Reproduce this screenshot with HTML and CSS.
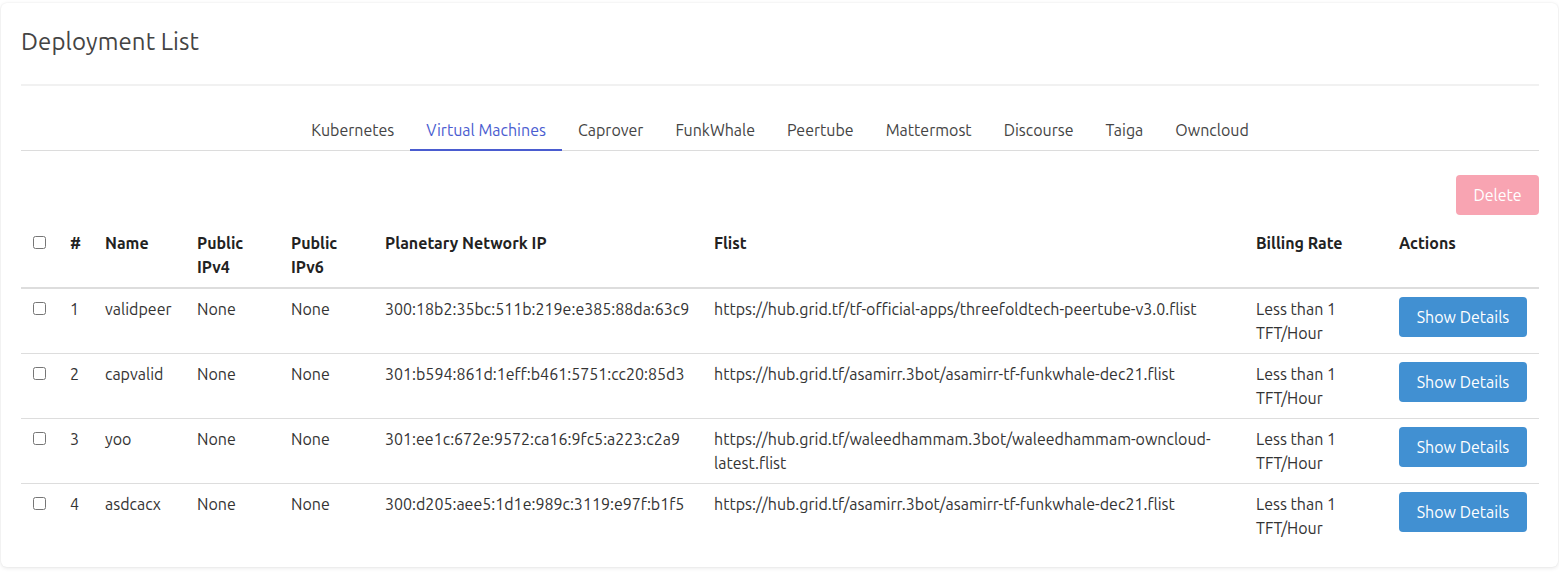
FILE: index.html
```html
<!DOCTYPE html>
<html>
<head>
<meta charset="utf-8">
<link rel="stylesheet" href="styles.css">
</head>
<body>
<div class="card">
  <h1 class="title">Deployment List</h1>
  <div class="divider"></div>
  <nav class="tabs">
    <a class="tab">Kubernetes</a>
    <a class="tab active">Virtual Machines</a>
    <a class="tab">Caprover</a>
    <a class="tab">FunkWhale</a>
    <a class="tab">Peertube</a>
    <a class="tab">Mattermost</a>
    <a class="tab">Discourse</a>
    <a class="tab">Taiga</a>
    <a class="tab">Owncloud</a>
  </nav>
  <div class="toolbar">
    <button class="btn btn-delete" disabled>Delete</button>
  </div>
  <table class="list">
    <colgroup>
      <col class="c-check"><col class="c-num"><col class="c-name"><col class="c-ip4"><col class="c-ip6"><col class="c-pip"><col class="c-flist"><col class="c-bill"><col class="c-act">
    </colgroup>
    <thead>
      <tr>
        <th><input type="checkbox" class="chk"></th>
        <th>#</th>
        <th>Name</th>
        <th>Public IPv4</th>
        <th>Public IPv6</th>
        <th>Planetary Network IP</th>
        <th>Flist</th>
        <th>Billing Rate</th>
        <th>Actions</th>
      </tr>
    </thead>
    <tbody>
      <tr>
        <td><input type="checkbox" class="chk"></td>
        <td>1</td>
        <td>validpeer</td>
        <td>None</td>
        <td>None</td>
        <td>300:18b2:35bc:511b:219e:e385:88da:63c9</td>
        <td>https://hub.grid.tf/tf-official-apps/threefoldtech-peertube-v3.0.flist</td>
        <td>Less than 1 TFT/Hour</td>
        <td><button class="btn btn-details">Show Details</button></td>
      </tr>
      <tr>
        <td><input type="checkbox" class="chk"></td>
        <td>2</td>
        <td>capvalid</td>
        <td>None</td>
        <td>None</td>
        <td>301:b594:861d:1eff:b461:5751:cc20:85d3</td>
        <td>https://hub.grid.tf/asamirr.3bot/asamirr-tf-funkwhale-dec21.flist</td>
        <td>Less than 1 TFT/Hour</td>
        <td><button class="btn btn-details">Show Details</button></td>
      </tr>
      <tr>
        <td><input type="checkbox" class="chk"></td>
        <td>3</td>
        <td>yoo</td>
        <td>None</td>
        <td>None</td>
        <td>301:ee1c:672e:9572:ca16:9fc5:a223:c2a9</td>
        <td>https://hub.grid.tf/waleedhammam.3bot/waleedhammam-owncloud-latest.flist</td>
        <td>Less than 1 TFT/Hour</td>
        <td><button class="btn btn-details">Show Details</button></td>
      </tr>
      <tr>
        <td><input type="checkbox" class="chk"></td>
        <td>4</td>
        <td>asdcacx</td>
        <td>None</td>
        <td>None</td>
        <td>300:d205:aee5:1d1e:989c:3119:e97f:b1f5</td>
        <td>https://hub.grid.tf/asamirr.3bot/asamirr-tf-funkwhale-dec21.flist</td>
        <td>Less than 1 TFT/Hour</td>
        <td><button class="btn btn-details">Show Details</button></td>
      </tr>
    </tbody>
  </table>
</div>
</body>
</html>
```

FILE: styles.css
```css
* { box-sizing: border-box; }
html, body { margin: 0; padding: 0; background: #ffffff; }
body {
  font-family: "Ubuntu", "Open Sans", "Noto Sans", sans-serif;
  font-size: 16px;
  color: #333333;
  padding: 3px 1px 7px 1px;
}
.card {
  background: #fff;
  border-radius: 6px;
  box-shadow: 0 1px 4px rgba(0,0,0,0.10), 0 0 2px rgba(0,0,0,0.05);
  padding: 20px 19px 19px 20px;
  height: 564px;
}
.title {
  margin: 0;
  padding-top: 3px;
  font-size: 24px;
  font-weight: 400;
  line-height: 32px;
  color: #444;
  letter-spacing: 0.1px;
}
.divider {
  margin-top: 26px;
  height: 2px;
  background: #f1f1f1;
}
.tabs {
  margin-top: 24px;
  display: flex;
  justify-content: center;
  border-bottom: 1px solid #dcdcdc;
}
.tab {
  padding: 8px 16px 7px;
  line-height: 24px;
  font-size: 16px;
  color: #444;
  border-bottom: 2px solid transparent;
  margin-bottom: -1px;
}
.tab.active {
  color: #4a5cd0;
  border-bottom-color: #4a5cd0;
}
.toolbar {
  display: flex;
  justify-content: flex-end;
  margin-top: 24px;
}
.btn {
  font-family: inherit;
  font-size: 16px;
  color: #fff;
  border: none;
  border-radius: 4px;
  height: 40px;
  padding: 0;
  line-height: 40px;
}
.btn-delete {
  width: 83px;
  background: #f8a4b2;
}
.btn-details {
  width: 128px;
  background: #4190d2;
}
.list {
  margin-top: 8px;
  width: 100%;
  border-collapse: collapse;
  table-layout: fixed;
}
.c-check { width: 37px; }
.c-num { width: 35px; }
.c-name { width: 92px; }
.c-ip4 { width: 94px; }
.c-ip6 { width: 94px; }
.c-pip { width: 329px; }
.c-flist { width: 542px; }
.c-bill { width: 143px; }
.c-act { width: 152px; }
.list th, .list td {
  text-align: left;
  vertical-align: top;
  padding: 8px 12px;
  line-height: 24px;
}
.list th {
  font-weight: 700;
  color: #222;
  border-bottom: 2px solid #dddddd;
}
.list td {
  border-top: 1px solid #dddddd;
}
.list tbody tr:first-child td { border-top: none; }
.chk {
  margin: 0;
  width: 13px;
  height: 13px;
  vertical-align: middle;
  position: relative;
  top: -2px;
}
```
